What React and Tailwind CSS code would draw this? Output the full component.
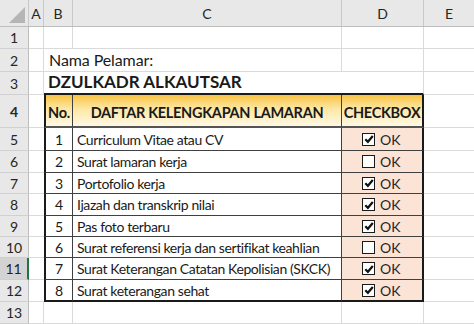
import React from "react";

const items = [
  ["1", "Curriculum Vitae atau CV", true],
  ["2", "Surat lamaran kerja", false],
  ["3", "Portofolio kerja", true],
  ["4", "Ijazah dan transkrip nilai", true],
  ["5", "Pas foto terbaru", true],
  ["6", "Surat referensi kerja dan sertifikat keahlian", false],
  ["7", "Surat Keterangan Catatan Kepolisian (SKCK)", true],
  ["8", "Surat keterangan sehat", true],
];
const heights = ["h-[23px]", "h-[22px]", "h-[21px]", "h-[22px]", "h-[21px]", "h-[21px]", "h-[22px]", "h-[22px]"];

function RowHead({ n, selected }) {
  return (
    <div
      className={
        "w-[29px] shrink-0 flex items-center justify-center box-border border-b border-[#d0d0d0] text-[14px] " +
        (selected
          ? "bg-[#d3d3d3] border-r-2 border-r-[#217346] text-[#1f1f1f]"
          : "bg-[#e8e8e8] border-r border-r-[#bdbdbd] text-[#262626]")
      }
    >
      {n}
    </div>
  );
}

function Check({ on }) {
  return (
    <div className="w-[13px] h-[13px] shrink-0 box-border border-[1.5px] border-[#1a1a1a] bg-white flex items-center justify-center">
      {on && (
        <svg width="10" height="10" viewBox="0 0 10 10">
          <path d="M1.3 5.2 L3.9 7.8 L8.8 2" fill="none" stroke="#111" strokeWidth="2.2" />
        </svg>
      )}
    </div>
  );
}

export default function App() {
  return (
    <div className="w-[474px] h-[324px] overflow-hidden bg-white font-[Lato,sans-serif] text-[#1a1a1a] select-none">
      {/* column headers */}
      <div className="flex h-[27px] bg-[#e8e8e8] border-b border-[#bdbdbd] box-border text-[14px] text-[#262626]">
        <div className="w-[29px] shrink-0 relative border-r border-[#c8c8c8] box-border">
          <div className="absolute right-[3px] bottom-[3px] w-0 h-0 border-l-[16px] border-l-transparent border-b-[16px] border-b-[#b5b5b5]" />
        </div>
        <div className="w-[15px] shrink-0 flex items-center justify-center border-r border-[#c8c8c8] box-border">A</div>
        <div className="w-[29px] shrink-0 flex items-center justify-center border-r border-[#c8c8c8] box-border">B</div>
        <div className="w-[269px] shrink-0 flex items-center justify-center border-r border-[#c8c8c8] box-border">C</div>
        <div className="w-[82px] shrink-0 flex items-center justify-center border-r border-[#c8c8c8] box-border">D</div>
        <div className="flex-1 flex items-center justify-center">E</div>
      </div>

      {/* row 1 */}
      <div className="flex h-[22px]">
        <RowHead n="1" />
        <div className="w-[15px] shrink-0 border-r border-b border-[#dadada] box-border" />
        <div className="w-[29px] shrink-0 border-r border-b border-[#dadada] box-border" />
        <div className="w-[269px] shrink-0 border-r border-b border-[#dadada] box-border" />
        <div className="w-[82px] shrink-0 border-r border-b border-[#dadada] box-border" />
        <div className="flex-1 border-b border-[#dadada] box-border" />
      </div>

      {/* row 2 */}
      <div className="flex h-[23px]">
        <RowHead n="2" />
        <div className="w-[15px] shrink-0 border-r border-b border-[#dadada] box-border" />
        <div className="w-[298px] shrink-0 border-r border-b border-[#dadada] box-border flex items-end pl-[5px] text-[16px] tracking-[-0.1px] whitespace-nowrap leading-none">
          <span className="pb-[3px]">Nama Pelamar:</span>
        </div>
        <div className="w-[82px] shrink-0 border-r border-b border-[#dadada] box-border" />
        <div className="flex-1 border-b border-[#dadada] box-border" />
      </div>

      {/* row 3 */}
      <div className="flex h-[23px]">
        <RowHead n="3" />
        <div className="w-[15px] shrink-0 border-r border-b border-[#dadada] box-border" />
        <div className="w-[298px] shrink-0 border-b-2 border-b-[#1a1a1a] box-border flex items-end pl-[4px] text-[17px] font-bold whitespace-nowrap leading-none">
          <span className="pb-[3px]">DZULKADR ALKAUTSAR</span>
        </div>
        <div className="w-[82px] shrink-0 border-r border-r-[#dadada] border-b-2 border-b-[#1a1a1a] box-border" />
        <div className="flex-1 border-b border-[#dadada] box-border" />
      </div>

      {/* row 4 header */}
      <div className="flex h-[33px] text-[14.5px] font-bold tracking-[-0.3px]">
        <RowHead n="4" />
        <div className="w-[15px] shrink-0 border-b border-[#dadada] box-border" />
        <div className="w-[29px] shrink-0 box-border border-l-2 border-l-[#1a1a1a] border-r border-r-[#404040] border-b-2 border-b-[#555] bg-linear-to-b from-[#f8c23a] via-[#fde8a4] via-45% to-[#fff8e4] flex items-center justify-center pt-[5px]">
          No.
        </div>
        <div className="w-[269px] shrink-0 box-border border-r border-r-[#404040] border-b-2 border-b-[#555] bg-linear-to-b from-[#f8c23a] via-[#fde8a4] via-45% to-[#fff8e4] flex items-center justify-center pt-[5px] whitespace-nowrap">
          DAFTAR KELENGKAPAN LAMARAN
        </div>
        <div className="w-[82px] shrink-0 box-border border-r-2 border-r-[#1a1a1a] border-b-2 border-b-[#555] bg-linear-to-b from-[#f8c23a] via-[#fde8a4] via-45% to-[#fff8e4] flex items-center justify-center pt-[5px]">
          CHECKBOX
        </div>
        <div className="flex-1 border-b border-[#dadada] box-border" />
      </div>

      {/* rows 5-12 */}
      {items.map(([no, text, on], i) => {
        const last = i === items.length - 1;
        return (
          <div key={no} className={"flex text-[14px] " + heights[i]}>
            <RowHead n={String(i + 5)} selected={i === 6} />
            <div className="w-[15px] shrink-0 border-b border-[#dadada] box-border" />
            <div
              className={
                "w-[29px] shrink-0 box-border border-l-2 border-l-[#1a1a1a] border-r border-r-[#404040] flex items-center justify-center " +
                (last ? "border-b-2 border-b-[#1a1a1a]" : "border-b border-b-[#404040]")
              }
            >
              {no}
            </div>
            <div
              className={
                "w-[269px] shrink-0 box-border border-r border-r-[#404040] flex items-center pl-[4px] tracking-[-0.4px] whitespace-nowrap " +
                (last ? "border-b-2 border-b-[#1a1a1a]" : "border-b border-b-[#404040]")
              }
            >
              {text}
            </div>
            <div
              className={
                "w-[82px] shrink-0 box-border border-r-2 border-r-[#1a1a1a] bg-[#fbe3d6] flex items-center pl-[20px] gap-[5px] " +
                (last ? "border-b-2 border-b-[#1a1a1a]" : "border-b border-b-[#404040]")
              }
            >
              <Check on={on} />
              <span className="text-[#262626]">OK</span>
            </div>
            <div className="flex-1 border-b border-[#dadada] box-border" />
          </div>
        );
      })}

      {/* row 13 */}
      <div className="flex h-[22px]">
        <RowHead n="13" />
        <div className="w-[15px] shrink-0 border-r border-b border-[#dadada] box-border" />
        <div className="w-[29px] shrink-0 border-r border-b border-[#dadada] box-border" />
        <div className="w-[269px] shrink-0 border-r border-b border-[#dadada] box-border" />
        <div className="w-[82px] shrink-0 border-r border-b border-[#dadada] box-border" />
        <div className="flex-1 border-b border-[#dadada] box-border" />
      </div>
    </div>
  );
}
